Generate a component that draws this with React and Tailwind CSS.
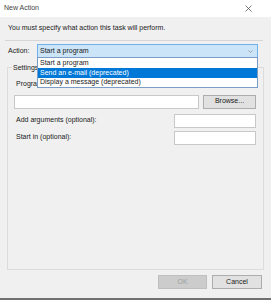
import React from "react";

function Field({ className }) {
  return <div className={"h-[14px] bg-white border border-[#c8c8c8] " + className}></div>;
}

function App() {
  return (
    <div
      className="w-[271px] h-[300px] bg-[#f0f0f0] flex flex-col text-[7px] text-[#1a1a1a] overflow-hidden"
      style={{ fontFamily: "'Liberation Sans', Arial, sans-serif" }}
    >
      {/* title bar */}
      <div className="h-[17px] bg-white flex items-center justify-between pl-[4px] pr-[19px] shrink-0">
        <span className="text-[#444]">New Action</span>
        <svg width="7" height="7" viewBox="0 0 7 7" className="text-[#555]">
          <path d="M0.5 0.5L6.5 6.5M6.5 0.5L0.5 6.5" stroke="currentColor" strokeWidth="0.8" />
        </svg>
      </div>

      <div className="flex-1 flex flex-col px-[5px] relative">
        <div className="h-[23px] flex items-center pl-[3px]">You must specify what action this task will perform.</div>
        <div className="h-px bg-[#d6d6d6] w-[258px]"></div>

        {/* action row */}
        <div className="flex items-center mt-[3px] pl-[3px]">
          <span className="w-[29px]">Action:</span>
          <div className="relative w-[221px] h-[14px] bg-[#cce4f7] border border-[#6fb1e8] flex items-center justify-between pl-[2px] pr-[4px]">
            <span>Start a program</span>
            <svg width="5" height="3" viewBox="0 0 5 3">
              <path d="M0.5 0.5L2.5 2.5L4.5 0.5" stroke="#888" strokeWidth="0.7" fill="none" />
            </svg>
            {/* dropdown list */}
            <div className="absolute left-[-1px] top-[12px] w-[221px] bg-white border border-[#7a9cc6] z-10 flex flex-col">
              <div className="h-[10px] flex items-center pl-[2px]">Start a program</div>
              <div className="h-[10px] flex items-center pl-[2px] bg-[#0078d7] text-white">Send an e-mail (deprecated)</div>
              <div className="h-[9px] flex items-center pl-[2px]">Display a message (deprecated)</div>
            </div>
          </div>
        </div>

        {/* settings group */}
        <div className="relative mt-[9px] ml-[2px] w-[257px] h-[203px] border border-[#dcdcdc] flex flex-col px-[6px]">
          <span className="absolute left-[4px] top-[-5px] bg-[#f0f0f0] px-[1px]">Settings</span>
          <div className="mt-[11px] pl-[2px]">Program/script:</div>
          <div className="flex items-center mt-[5px]">
            <Field className="w-[185px]" />
            <div className="ml-[4px] w-[53px] h-[14px] bg-[#e1e1e1] border border-[#adadad] flex items-center justify-center">Browse...</div>
          </div>
          <div className="flex items-center justify-between mt-[5px]">
            <span className="pl-[2px]">Add arguments (optional):</span>
            <Field className="w-[82px] mr-[1px]" />
          </div>
          <div className="flex items-center justify-between mt-[3px]">
            <span className="pl-[2px]">Start in (optional):</span>
            <Field className="w-[82px] mr-[1px]" />
          </div>
        </div>

        {/* buttons */}
        <div className="flex justify-end gap-[5px] mt-[5px] pr-[4px]">
          <div className="w-[49px] h-[14px] bg-[#cccccc] border border-[#bfbfbf] flex items-center justify-center text-[#a0a0a0]">OK</div>
          <div className="w-[50px] h-[14px] bg-[#e1e1e1] border border-[#adadad] flex items-center justify-center">Cancel</div>
        </div>
      </div>
      <div className="h-[2px] bg-[#707070] shrink-0"></div>
    </div>
  );
}

export default App;
